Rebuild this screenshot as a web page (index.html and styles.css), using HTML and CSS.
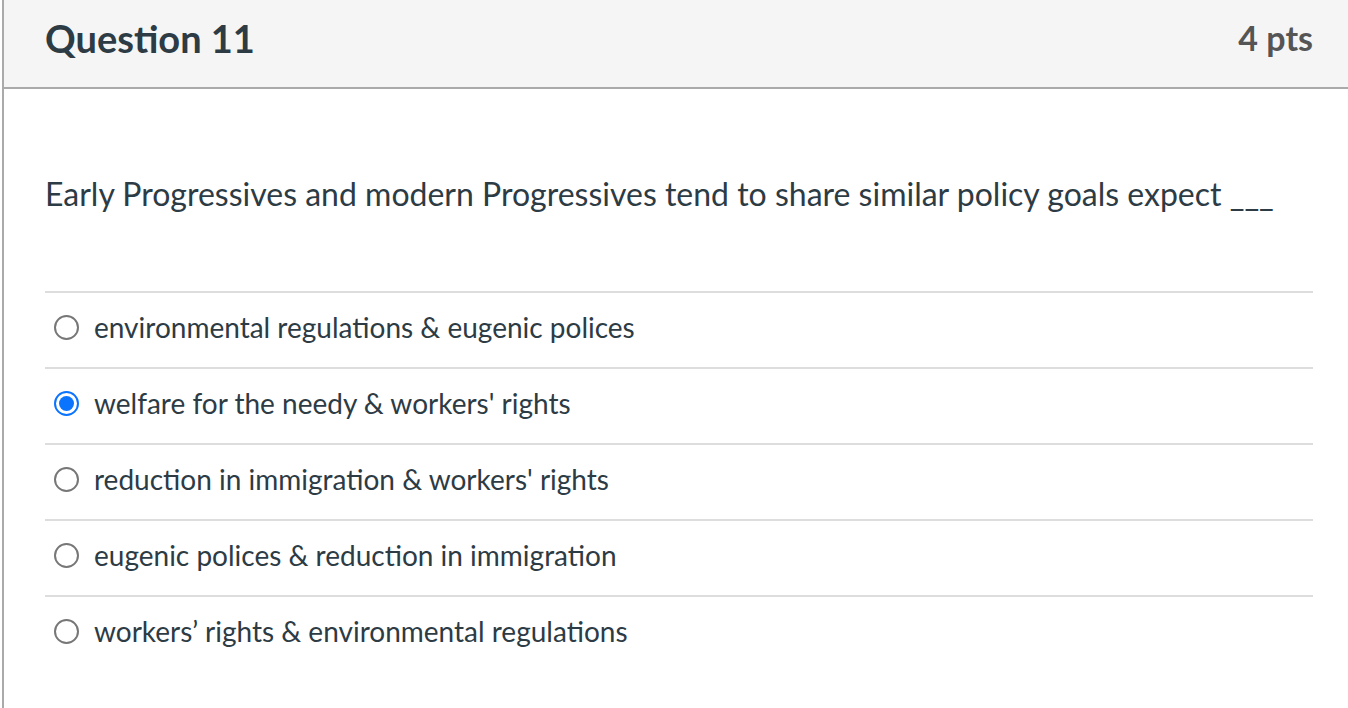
FILE: index.html
```html
<!DOCTYPE html>
<html lang="en">
<head>
<meta charset="utf-8">
<title>Question 11</title>
<link rel="stylesheet" href="styles.css">
</head>
<body>
<div class="question">
  <div class="question-header">
    <h2 class="question-title">Question 11</h2>
    <span class="question-points">4 pts</span>
  </div>
  <div class="question-body">
    <p class="question-text">Early Progressives and modern Progressives tend to share similar policy goals expect ___</p>
    <div class="answers">
      <label class="answer"><span class="radio"></span><span class="answer-text">environmental regulations &amp; eugenic polices</span></label>
      <label class="answer"><span class="radio checked"></span><span class="answer-text">welfare for the needy &amp; workers' rights</span></label>
      <label class="answer"><span class="radio"></span><span class="answer-text">reduction in immigration &amp; workers' rights</span></label>
      <label class="answer"><span class="radio"></span><span class="answer-text">eugenic polices &amp; reduction in immigration</span></label>
      <label class="answer"><span class="radio"></span><span class="answer-text">workers’ rights &amp; environmental regulations</span></label>
    </div>
  </div>
</div>
</body>
</html>
```
FILE: styles.css
```css
html, body {
  margin: 0;
  padding: 0;
  background: #ffffff;
  overflow: hidden;
}
body {
  font-family: Lato, "Open Sans", "Liberation Sans", sans-serif;
  color: #2d3b45;
}
.question {
  margin-left: 2px;
  border-left: 2px solid #aaaaaa;
  height: 708px;
}
.question-header {
  display: flex;
  justify-content: space-between;
  align-items: center;
  box-sizing: border-box;
  height: 89px;
  background: #f5f5f5;
  border-bottom: 2px solid #aaaaaa;
  padding: 0 35px 12px 41px;
}
.question-title {
  margin: 0;
  font-size: 38px;
  font-weight: 700;
  line-height: 46px;
  color: #2d3b45;
}
.question-points {
  font-size: 34px;
  font-weight: 700;
  line-height: 46px;
  color: #555555;
}
.question-body {
  padding: 0 35px 0 41px;
}
.question-text {
  margin: 0;
  padding: 86px 0 78px;
  font-size: 32px;
  line-height: 38px;
}
.answers {
  display: flex;
  flex-direction: column;
}
.answer {
  display: flex;
  align-items: center;
  gap: 15px;
  box-sizing: border-box;
  height: 76px;
  border-top: 2px solid #dddddd;
  padding: 0 0 6px 9px;
  font-size: 28px;
}
.radio {
  width: 21px;
  height: 21px;
  border: 2px solid #777777;
  border-radius: 50%;
  flex: none;
  box-sizing: content-box;
  position: relative;
}
.radio.checked {
  border-color: #0b74ff;
}
.radio.checked::after {
  content: "";
  position: absolute;
  left: 3px;
  top: 3px;
  width: 15px;
  height: 15px;
  border-radius: 50%;
  background: #0b74ff;
}
```
